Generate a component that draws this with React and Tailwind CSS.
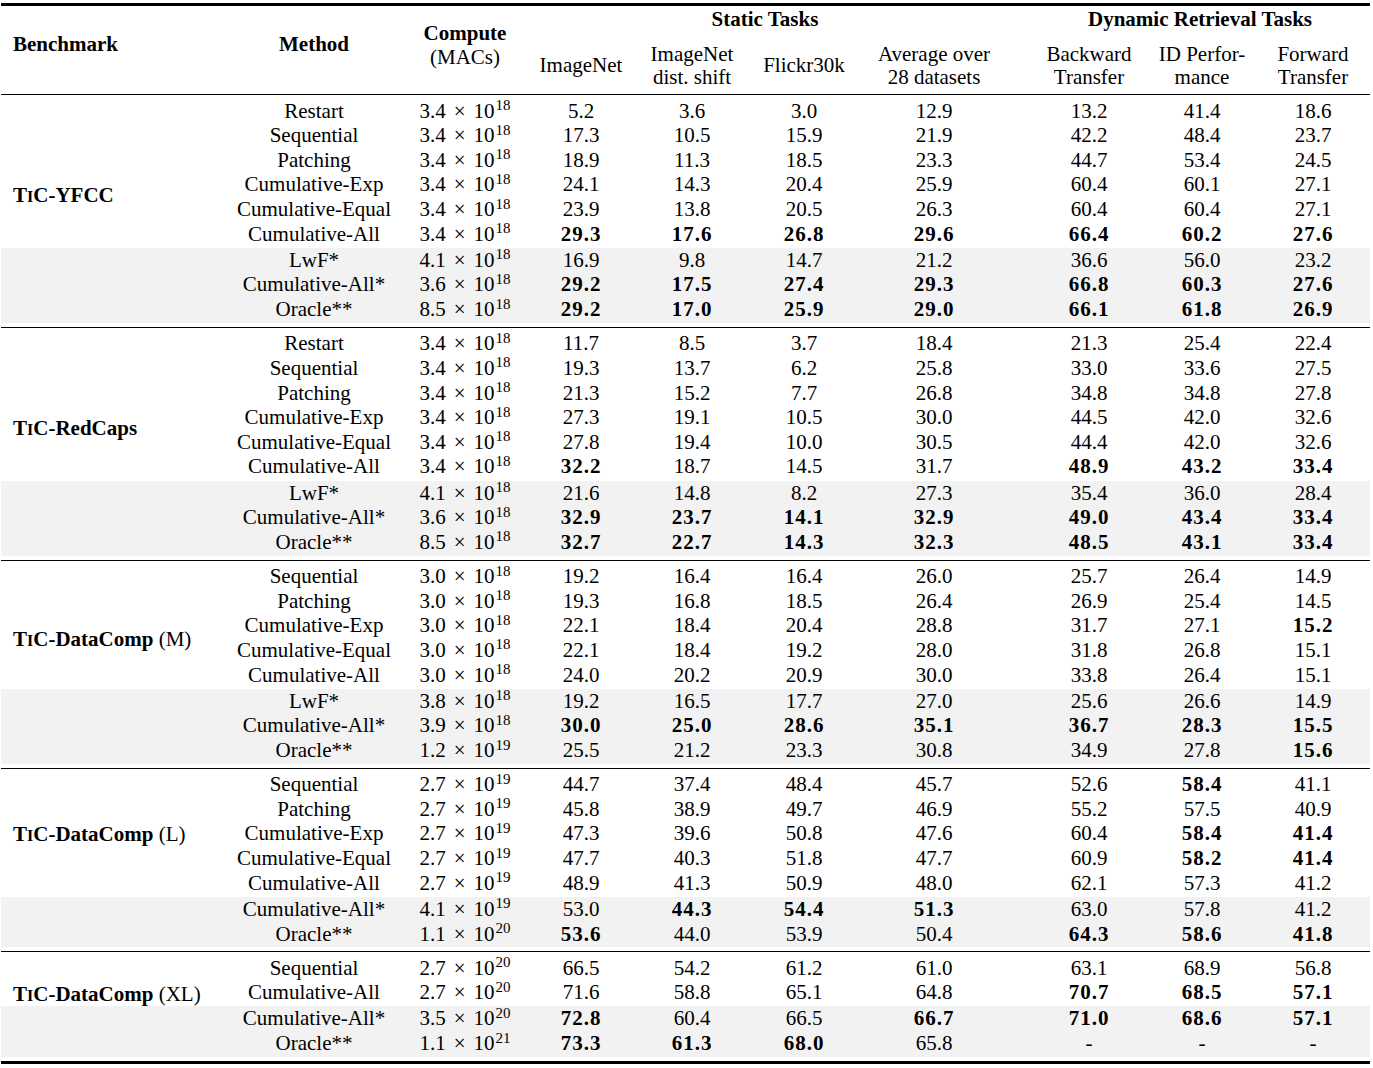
import React from "react";

const COLS =
  "grid grid-cols-[245px_136px_166px_66px_156px_68px_192px_118px_108px_114px]";

const BLOCKS = [
  {
    name: "YFCC",
    suffix: "",
    top: "top-[88px]",
    white: [
      ["Restart", "3.4", "18", "5.2", "3.6", "3.0", "12.9", "13.2", "41.4", "18.6"],
      ["Sequential", "3.4", "18", "17.3", "10.5", "15.9", "21.9", "42.2", "48.4", "23.7"],
      ["Patching", "3.4", "18", "18.9", "11.3", "18.5", "23.3", "44.7", "53.4", "24.5"],
      ["Cumulative-Exp", "3.4", "18", "24.1", "14.3", "20.4", "25.9", "60.4", "60.1", "27.1"],
      ["Cumulative-Equal", "3.4", "18", "23.9", "13.8", "20.5", "26.3", "60.4", "60.4", "27.1"],
      ["Cumulative-All", "3.4", "18", "!29.3", "!17.6", "!26.8", "!29.6", "!66.4", "!60.2", "!27.6"],
    ],
    gray: [
      ["LwF*", "4.1", "18", "16.9", "9.8", "14.7", "21.2", "36.6", "56.0", "23.2"],
      ["Cumulative-All*", "3.6", "18", "!29.2", "!17.5", "!27.4", "!29.3", "!66.8", "!60.3", "!27.6"],
      ["Oracle**", "8.5", "18", "!29.2", "!17.0", "!25.9", "!29.0", "!66.1", "!61.8", "!26.9"],
    ],
  },
  {
    name: "RedCaps",
    suffix: "",
    top: "top-[88px]",
    white: [
      ["Restart", "3.4", "18", "11.7", "8.5", "3.7", "18.4", "21.3", "25.4", "22.4"],
      ["Sequential", "3.4", "18", "19.3", "13.7", "6.2", "25.8", "33.0", "33.6", "27.5"],
      ["Patching", "3.4", "18", "21.3", "15.2", "7.7", "26.8", "34.8", "34.8", "27.8"],
      ["Cumulative-Exp", "3.4", "18", "27.3", "19.1", "10.5", "30.0", "44.5", "42.0", "32.6"],
      ["Cumulative-Equal", "3.4", "18", "27.8", "19.4", "10.0", "30.5", "44.4", "42.0", "32.6"],
      ["Cumulative-All", "3.4", "18", "!32.2", "18.7", "14.5", "31.7", "!48.9", "!43.2", "!33.4"],
    ],
    gray: [
      ["LwF*", "4.1", "18", "21.6", "14.8", "8.2", "27.3", "35.4", "36.0", "28.4"],
      ["Cumulative-All*", "3.6", "18", "!32.9", "!23.7", "!14.1", "!32.9", "!49.0", "!43.4", "!33.4"],
      ["Oracle**", "8.5", "18", "!32.7", "!22.7", "!14.3", "!32.3", "!48.5", "!43.1", "!33.4"],
    ],
  },
  {
    name: "DataComp",
    suffix: " (M)",
    top: "top-[66px]",
    white: [
      ["Sequential", "3.0", "18", "19.2", "16.4", "16.4", "26.0", "25.7", "26.4", "14.9"],
      ["Patching", "3.0", "18", "19.3", "16.8", "18.5", "26.4", "26.9", "25.4", "14.5"],
      ["Cumulative-Exp", "3.0", "18", "22.1", "18.4", "20.4", "28.8", "31.7", "27.1", "!15.2"],
      ["Cumulative-Equal", "3.0", "18", "22.1", "18.4", "19.2", "28.0", "31.8", "26.8", "15.1"],
      ["Cumulative-All", "3.0", "18", "24.0", "20.2", "20.9", "30.0", "33.8", "26.4", "15.1"],
    ],
    gray: [
      ["LwF*", "3.8", "18", "19.2", "16.5", "17.7", "27.0", "25.6", "26.6", "14.9"],
      ["Cumulative-All*", "3.9", "18", "!30.0", "!25.0", "!28.6", "!35.1", "!36.7", "!28.3", "!15.5"],
      ["Oracle**", "1.2", "19", "25.5", "21.2", "23.3", "30.8", "34.9", "27.8", "!15.6"],
    ],
  },
  {
    name: "DataComp",
    suffix: " (L)",
    top: "top-[53px]",
    white: [
      ["Sequential", "2.7", "19", "44.7", "37.4", "48.4", "45.7", "52.6", "!58.4", "41.1"],
      ["Patching", "2.7", "19", "45.8", "38.9", "49.7", "46.9", "55.2", "57.5", "40.9"],
      ["Cumulative-Exp", "2.7", "19", "47.3", "39.6", "50.8", "47.6", "60.4", "!58.4", "!41.4"],
      ["Cumulative-Equal", "2.7", "19", "47.7", "40.3", "51.8", "47.7", "60.9", "!58.2", "!41.4"],
      ["Cumulative-All", "2.7", "19", "48.9", "41.3", "50.9", "48.0", "62.1", "57.3", "41.2"],
    ],
    gray: [
      ["Cumulative-All*", "4.1", "19", "53.0", "!44.3", "!54.4", "!51.3", "63.0", "57.8", "41.2"],
      ["Oracle**", "1.1", "20", "!53.6", "44.0", "53.9", "50.4", "!64.3", "!58.6", "!41.8"],
    ],
  },
  {
    name: "DataComp",
    suffix: " (XL)",
    top: "top-[30px]",
    white: [
      ["Sequential", "2.7", "20", "66.5", "54.2", "61.2", "61.0", "63.1", "68.9", "56.8"],
      ["Cumulative-All", "2.7", "20", "71.6", "58.8", "65.1", "64.8", "!70.7", "!68.5", "!57.1"],
    ],
    gray: [
      ["Cumulative-All*", "3.5", "20", "!72.8", "60.4", "66.5", "!66.7", "!71.0", "!68.6", "!57.1"],
      ["Oracle**", "1.1", "21", "!73.3", "!61.3", "!68.0", "65.8", "-", "-", "-"],
    ],
  },
];

function Compute({ m, e }) {
  return (
    <span className="whitespace-nowrap">
      {m}
      <span className="mx-[8px]">×</span>
      10
      <sup className="text-[15px] ml-[1px]">{e}</sup>
    </span>
  );
}

function Row({ r }) {
  const [method, m, e, ...vals] = r;
  return (
    <div className={`${COLS} h-[24.65px] items-center leading-[24.65px]`}>
      <div />
      <div className="flex justify-center whitespace-nowrap">{method}</div>
      <div className="flex justify-center">
        <Compute m={m} e={e} />
      </div>
      {vals.map((v, i) => {
        const bold = v.startsWith("!");
        const t = bold ? v.slice(1) : v;
        return (
          <div
            key={i}
            className={
              bold
                ? "flex justify-center whitespace-nowrap font-bold tracking-[1px]"
                : "flex justify-center whitespace-nowrap"
            }
          >
            {t}
          </div>
        );
      })}
    </div>
  );
}

function Block({ b }) {
  return (
    <div className="relative border-t border-black mb-[4px]">
      <div className="pt-[3.5px] pb-[1.5px]">
        {b.white.map((r, i) => (
          <Row key={i} r={r} />
        ))}
      </div>
      <div className="bg-[#f2f2f2] pb-[1px]">
        {b.gray.map((r, i) => (
          <Row key={i} r={r} />
        ))}
      </div>
      <div
        className={`absolute left-[12px] ${b.top} leading-[24.65px] whitespace-nowrap`}
      >
        <span className="font-bold">
          T<span className="text-[16px]">I</span>C-{b.name}
        </span>
        {b.suffix}
      </div>
    </div>
  );
}

function SubHead({ a, b }) {
  return (
    <div className="flex flex-col items-center justify-center pt-[3px] leading-[23px] whitespace-nowrap">
      <span>{a}</span>
      {b ? <span>{b}</span> : null}
    </div>
  );
}

export default function App() {
  return (
    <div className="bg-white w-[1373px] min-h-[1068px] pt-[3px] font-['Liberation_Serif',serif] text-[21px] text-black">
      <div className="ml-[1px] w-[1369px] border-t-[3px] border-b-[3px] border-black">
        <div className={`${COLS} grid-rows-[28px_60px] h-[88px]`}>
          <div className="row-span-2 flex items-center pl-[12px] pb-[11px] font-bold">
            Benchmark
          </div>
          <div className="row-span-2 flex items-center justify-center pb-[11px] font-bold">
            Method
          </div>
          <div className="row-span-2 flex flex-col items-center justify-center pb-[11px] leading-[24px]">
            <span className="font-bold">Compute</span>
            <span>(MACs)</span>
          </div>
          <div className="col-span-4 flex items-center justify-center pr-[48px] font-bold whitespace-nowrap">
            Static Tasks
          </div>
          <div className="col-span-3 flex items-center justify-center font-bold whitespace-nowrap">
            Dynamic Retrieval Tasks
          </div>
          <SubHead a="ImageNet" />
          <SubHead a="ImageNet" b="dist. shift" />
          <SubHead a="Flickr30k" />
          <SubHead a="Average over" b="28 datasets" />
          <SubHead a="Backward" b="Transfer" />
          <SubHead a="ID Perfor-" b="mance" />
          <SubHead a="Forward" b="Transfer" />
        </div>
        {BLOCKS.map((b, i) => (
          <Block key={i} b={b} />
        ))}
      </div>
    </div>
  );
}
